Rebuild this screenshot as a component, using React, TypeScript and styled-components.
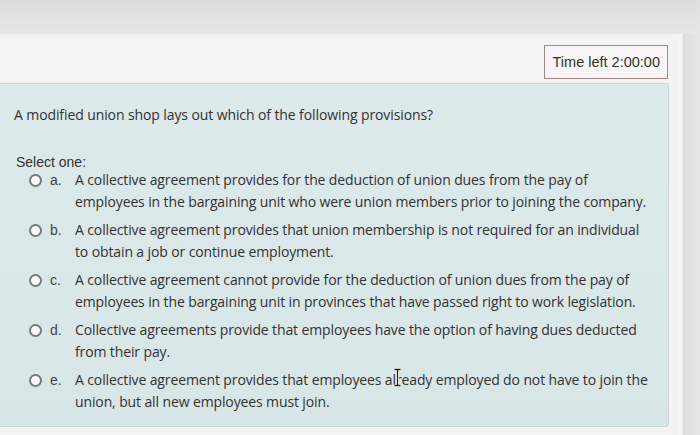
import { ReactNode } from 'react';
import styled, { createGlobalStyle } from 'styled-components';

const GlobalStyle = createGlobalStyle`
  html, body {
    margin: 0;
    padding: 0;
    background: #ececeb;
  }
`;

const Page = styled.div`
  display: flex;
  flex-direction: column;
  width: 700px;
  height: 435px;
  overflow: hidden;
  font-family: 'Open Sans', 'Liberation Sans', sans-serif;
  color: #323232;
`;

const TopBand = styled.div`
  height: 34px;
  flex-shrink: 0;
  background: linear-gradient(180deg, #dedede 0%, #e6e6e5 100%);
`;

const Main = styled.div`
  display: flex;
  flex: 1;
  min-height: 0;
`;

const Content = styled.div`
  flex: 1;
  display: flex;
  flex-direction: column;
  padding: 11px 10px 8px 0;
  background: #f3f3f2;
`;

const Gutter = styled.div`
  width: 21px;
  background: linear-gradient(90deg, #f6f6f5 0px, #f6f6f5 3px, #dedede 4px, #e6e6e6 100%);
`;

const TimerRow = styled.div`
  display: flex;
  justify-content: flex-end;
  padding-right: 1px;
`;

const Timer = styled.div`
  box-sizing: border-box;
  height: 34px;
  padding: 0 7px 0 8px;
  display: flex;
  align-items: center;
  border: 1px solid #a98585;
  background: #f7f5f5;
  font-family: 'Liberation Sans', Arial, sans-serif;
  font-size: 14.5px;
  color: #333;
`;

const QuestionCard = styled.div`
  flex: 1;
  margin-top: 4px;
  padding: 20px 0 0 14px;
  background: linear-gradient(180deg, #dde9ea 0%, #d9e6e7 100%);
  border: 1px solid #cbd9da;
  border-left: none;
  border-radius: 0 2px 4px 0;
`;

const QuestionText = styled.div`
  font-size: 14px;
  letter-spacing: -0.1px;
  line-height: 22px;
`;

const Prompt = styled.div`
  margin-top: 25px;
  padding-left: 2px;
  font-family: 'Liberation Sans', Arial, sans-serif;
  font-size: 14px;
  line-height: 22px;
`;

const Choices = styled.div`
  display: flex;
  flex-direction: column;
  gap: 6px;
  margin-top: -4px;
  padding-left: 14px;
`;

const ChoiceRow = styled.div`
  display: flex;
  align-items: flex-start;
`;

const Radio = styled.span`
  box-sizing: border-box;
  flex-shrink: 0;
  width: 13px;
  height: 13px;
  margin: 5px 0 0 1px;
  border: 2px solid #76797a;
  border-radius: 50%;
  background: #fbfbfb;
`;

const Letter = styled.span`
  width: 25px;
  padding-left: 8px;
  font-family: 'Liberation Sans', Arial, sans-serif;
  font-size: 14px;
  line-height: 22px;
  color: #444;
`;

const ChoiceText = styled.div`
  font-size: 14px;
  letter-spacing: -0.12px;
  line-height: 22px;
`;

const Line = styled.div`
  white-space: nowrap;
`;

const Hovered = styled.span`
  position: relative;
`;

const Cursor = styled.svg`
  position: absolute;
  left: -3px;
  top: -2px;
`;

const IBeam = () => (
  <Cursor viewBox="0 0 9 19" width="9" height="19">
    <path d="M1.5 1.5h6M4.5 1.5v16M1.5 17.5h6" stroke="#fff" strokeWidth="3" fill="none" />
    <path d="M1.5 1.5h6M4.5 1.5v16M1.5 17.5h6" stroke="#1e1e1e" strokeWidth="1.3" fill="none" />
  </Cursor>
);

interface Choice {
  letter: string;
  lines: ReactNode[];
}

const choices: Choice[] = [
  {
    letter: 'a.',
    lines: [
      'A collective agreement provides for the deduction of union dues from the pay of',
      'employees in the bargaining unit who were union members prior to joining the company.',
    ],
  },
  {
    letter: 'b.',
    lines: [
      'A collective agreement provides that union membership is not required for an individual',
      'to obtain a job or continue employment.',
    ],
  },
  {
    letter: 'c.',
    lines: [
      'A collective agreement cannot provide for the deduction of union dues from the pay of',
      'employees in the bargaining unit in provinces that have passed right to work legislation.',
    ],
  },
  {
    letter: 'd.',
    lines: [
      'Collective agreements provide that employees have the option of having dues deducted',
      'from their pay.',
    ],
  },
  {
    letter: 'e.',
    lines: [
      <>
        A collective agreement provides that employees al
        <Hovered>
          r
          <IBeam />
        </Hovered>
        eady employed do not have to join the
      </>,
      'union, but all new employees must join.',
    ],
  },
];

const App = () => (
  <>
    <GlobalStyle />
    <Page>
      <TopBand />
      <Main>
        <Content>
          <TimerRow>
            <Timer>Time left 2:00:00</Timer>
          </TimerRow>
          <QuestionCard>
            <QuestionText>A modified union shop lays out which of the following provisions?</QuestionText>
            <Prompt>Select one:</Prompt>
            <Choices>
              {choices.map((c) => (
                <ChoiceRow key={c.letter}>
                  <Radio />
                  <Letter>{c.letter}</Letter>
                  <ChoiceText>
                    {c.lines.map((l, i) => (
                      <Line key={i}>{l}</Line>
                    ))}
                  </ChoiceText>
                </ChoiceRow>
              ))}
            </Choices>
          </QuestionCard>
        </Content>
        <Gutter />
      </Main>
    </Page>
  </>
);

export default App;
